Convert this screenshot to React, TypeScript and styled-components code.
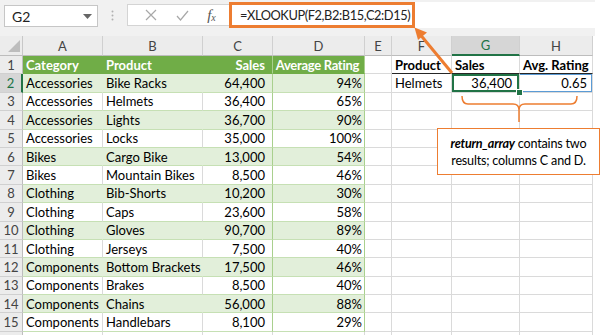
import React from 'react';
import styled, { createGlobalStyle } from 'styled-components';

const GlobalStyle = createGlobalStyle`
  html, body { margin: 0; padding: 0; background: #ffffff; }
  body { font-family: Lato, "Noto Sans", sans-serif; }
`;

const ORANGE = '#ED7D31';
const GRID = '#DADADA';
const TABLE_LINE = '#C6E0B4';
const TABLE_EDGE = '#A9D08E';
const BAND = '#E2EFDA';
const HEAD = '#70AD47';
const SELECT = '#217346';

const columns = ['A', 'B', 'C', 'D', 'E', 'F', 'G', 'H'];

const data: [string, string, string, string][] = [
  ['Accessories', 'Bike Racks', '64,400', '94%'],
  ['Accessories', 'Helmets', '36,400', '65%'],
  ['Accessories', 'Lights', '36,700', '90%'],
  ['Accessories', 'Locks', '35,000', '100%'],
  ['Bikes', 'Cargo Bike', '13,000', '54%'],
  ['Bikes', 'Mountain Bikes', '8,500', '46%'],
  ['Clothing', 'Bib-Shorts', '10,200', '30%'],
  ['Clothing', 'Caps', '23,600', '58%'],
  ['Clothing', 'Gloves', '90,700', '89%'],
  ['Clothing', 'Jerseys', '7,500', '40%'],
  ['Components', 'Bottom Brackets', '17,500', '46%'],
  ['Components', 'Brakes', '8,500', '40%'],
  ['Components', 'Chains', '56,000', '88%'],
  ['Components', 'Handlebars', '8,100', '29%'],
];

const App: React.FC = () => {
  return (
    <Page>
      <GlobalStyle />
      <FormulaBar>
        <NameBox>
          <span>G2</span>
          <svg width="9" height="5" viewBox="0 0 9 5">
            <path d="M0 0 L9 0 L4.5 5 Z" fill="#666" />
          </svg>
        </NameBox>
        <Grip>
          <svg width="3" height="11" viewBox="0 0 3 11">
            <circle cx="1.5" cy="1.5" r="1" fill="#B0B0B0" />
            <circle cx="1.5" cy="5.5" r="1" fill="#B0B0B0" />
            <circle cx="1.5" cy="9.5" r="1" fill="#B0B0B0" />
          </svg>
        </Grip>
        <Buttons>
          <svg width="12" height="12" viewBox="0 0 12 12">
            <path d="M1 1 L11 11 M11 1 L1 11" stroke="#A8A8A8" strokeWidth="1.2" />
          </svg>
          <svg width="13" height="11" viewBox="0 0 13 11">
            <path d="M1 6 L4.5 10 L12 1" stroke="#A8A8A8" strokeWidth="1.2" fill="none" />
          </svg>
          <Fx>
            f<sub>x</sub>
          </Fx>
        </Buttons>
        <FormulaInput>
          <FormulaBox>=XLOOKUP(F2,B2:B15,C2:D15)</FormulaBox>
        </FormulaInput>
      </FormulaBar>

      <Sheet>
        <Corner>
          <svg width="12" height="12" viewBox="0 0 12 12">
            <path d="M12 0 L12 12 L0 12 Z" fill="#BDBDBD" />
          </svg>
        </Corner>
        {columns.map((c) => (
          <ColHead key={c} $active={c === 'G'}>
            {c}
          </ColHead>
        ))}

        <RowHead>1</RowHead>
        <Cell $bg={HEAD} $color="#fff" $bold $right={HEAD} $bottom={HEAD}>Category</Cell>
        <Cell $bg={HEAD} $color="#fff" $bold $right={HEAD} $bottom={HEAD}>Product</Cell>
        <Cell $bg={HEAD} $color="#fff" $bold $align="right" $pad={7} $right={TABLE_EDGE} $bottom={HEAD}>
          Sales
        </Cell>
        <Cell $bg={HEAD} $color="#fff" $bold $align="right" $pad={5} $right={TABLE_EDGE} $bottom={HEAD}>
          <Tight>Average Rating</Tight>
        </Cell>
        <Cell />
        <Cell $bold $bottom="#262626">Product</Cell>
        <Cell $bold $bottom="#262626">Sales</Cell>
        <Cell $bold $bottom="#262626">Avg. Rating</Cell>

        {data.map((row, i) => {
          const n = i + 2;
          const band = n % 2 === 0;
          const bg = band ? BAND : '#fff';
          const inner = band ? BAND : GRID;
          return (
            <React.Fragment key={n}>
              <RowHead $active={n === 2}>{n}</RowHead>
              <Cell $bg={bg} $right={inner} $bottom={TABLE_LINE}>{row[0]}</Cell>
              <Cell $bg={bg} $right={inner} $bottom={TABLE_LINE}>{row[1]}</Cell>
              <Cell $bg={bg} $align="right" $pad={7} $right={TABLE_EDGE} $bottom={TABLE_LINE}>
                {row[2]}
              </Cell>
              <Cell $bg={bg} $align="right" $pad={2} $right={TABLE_EDGE} $bottom={TABLE_LINE}>
                {row[3]}
              </Cell>
              <Cell />
              {n === 2 ? (
                <>
                  <Cell>Helmets</Cell>
                  <Cell $align="right" $pad={7} $selected>
                    36,400
                  </Cell>
                  <Cell $align="right" $pad={5} $spill>
                    0.65
                  </Cell>
                </>
              ) : (
                <>
                  <Cell />
                  <Cell />
                  <Cell />
                </>
              )}
            </React.Fragment>
          );
        })}

        <RowHead />
        {columns.map((c) => (
          <Cell key={c} />
        ))}
      </Sheet>

      <Overlay width="602" height="335" viewBox="0 0 602 335">
        <path d="M452 73 L421 35.5" stroke={ORANGE} strokeWidth="3" fill="none" />
        <path d="M414.5 27.5 L427 32.5 L418 40 Z" fill={ORANGE} />
        <path
          d="M462 96 Q462 104 468 104 L513 104 Q519 104 519 110 L519 122 M519 110 Q519 104 525 104 L571 104 Q577 104 577 96"
          stroke={ORANGE}
          strokeWidth="1.5"
          fill="none"
        />
      </Overlay>

      <Callout>
        <CalloutLine>
          <em>return_array</em> contains two
        </CalloutLine>
        <CalloutLine>results; columns C and D.</CalloutLine>
      </Callout>
    </Page>
  );
};

export default App;

const Page = styled.div`
  position: relative;
  width: 602px;
  height: 335px;
  overflow: hidden;
  background: #ffffff;
  color: #000;
`;

const FormulaBar = styled.div`
  box-sizing: border-box;
  width: 595px;
  height: 36px;
  background: #f1f1f1;
  display: flex;
  align-items: flex-start;
  padding: 2px 0 0 4px;
`;

const NameBox = styled.div`
  box-sizing: border-box;
  width: 94px;
  height: 22px;
  margin-top: 3px;
  background: #fff;
  border: 1px solid #c6c6c6;
  display: flex;
  align-items: center;
  justify-content: space-between;
  padding: 0 5px 0 7px;
  font-size: 14px;
  color: #222;
`;

const Grip = styled.div`
  width: 29px;
  height: 26px;
  display: flex;
  align-items: center;
  justify-content: center;
`;

const Buttons = styled.div`
  box-sizing: border-box;
  width: 102px;
  height: 22px;
  margin-top: 2px;
  background: #fff;
  border: 1px solid #d4d4d4;
  border-right: none;
  display: flex;
  align-items: center;
  justify-content: space-around;
  padding: 0 4px 0 8px;
`;

const Fx = styled.span`
  font-family: "Liberation Serif", serif;
  font-style: italic;
  font-size: 15px;
  color: #555;
  sub {
    font-size: 10px;
    vertical-align: -1px;
  }
`;

const FormulaInput = styled.div`
  flex: 1;
  height: 26px;
  background: #fff;
  display: flex;
`;

const FormulaBox = styled.div`
  box-sizing: border-box;
  width: 186px;
  height: 26px;
  border: 3px solid ${ORANGE};
  display: flex;
  align-items: center;
  padding-left: 8px;
  font-size: 12.8px;
  letter-spacing: -0.4px;
  color: #222;
  white-space: nowrap;
`;

const Sheet = styled.div`
  display: grid;
  width: 593px;
  grid-template-columns: 23px 80px 100px 70px 92px 27px 60px 68px 73px;
  grid-template-rows: 20px repeat(15, 18.4px) 10px;
  font-size: 13px;
`;

const headBase = `
  box-sizing: border-box;
  background: #ececec;
  color: #444;
  display: flex;
  align-items: center;
  justify-content: center;
  font-size: 13px;
`;

const Corner = styled.div`
  ${headBase};
  justify-content: flex-end;
  align-items: flex-end;
  padding: 0 2px 3px 0;
  border-right: 1px solid #c8c8c8;
  border-bottom: 1px solid #bdbdbd;
`;

const ColHead = styled.div<{ $active?: boolean }>`
  ${headBase};
  border-right: 1px solid #d0d0d0;
  background: ${(p) => (p.$active ? '#d6d6d6' : '#ececec')};
  color: ${(p) => (p.$active ? SELECT : '#444')};
  border-bottom: ${(p) => (p.$active ? `2px solid ${SELECT}` : '1px solid #bdbdbd')};
`;

const RowHead = styled.div<{ $active?: boolean }>`
  ${headBase};
  background: ${(p) => (p.$active ? '#d6d6d6' : '#ececec')};
  color: ${(p) => (p.$active ? SELECT : '#444')};
  border-bottom: 1px solid #d0d0d0;
  border-right: ${(p) => (p.$active ? `2px solid ${SELECT}` : '1px solid #bdbdbd')};
`;

const Tight = styled.span`
  letter-spacing: -0.3px;
`;

const Cell = styled.div<{
  $bg?: string;
  $color?: string;
  $bold?: boolean;
  $align?: 'left' | 'right';
  $pad?: number;
  $right?: string;
  $bottom?: string;
  $selected?: boolean;
  $spill?: boolean;
}>`
  position: relative;
  box-sizing: border-box;
  display: flex;
  align-items: center;
  justify-content: ${(p) => (p.$align === 'right' ? 'flex-end' : 'flex-start')};
  padding: 0 ${(p) => p.$pad ?? 3}px 0 3px;
  background: ${(p) => p.$bg ?? '#fff'};
  color: ${(p) => p.$color ?? '#000'};
  font-weight: ${(p) => (p.$bold ? 700 : 400)};
  border-right: 1px solid ${(p) => p.$right ?? GRID};
  border-bottom: 1px solid ${(p) => p.$bottom ?? GRID};
  white-space: nowrap;
  ${(p) => p.$spill && `box-shadow: inset 0 1px 0 #5B9BD5, inset -1px 0 0 #5B9BD5, inset 0 -1px 0 #5B9BD5;`}
  ${(p) =>
    p.$selected &&
    `
    box-shadow: inset 0 0 0 2px ${SELECT};
    &::after {
      content: '';
      position: absolute;
      right: -4px;
      bottom: -4px;
      width: 5px;
      height: 5px;
      background: ${SELECT};
      border: 1px solid #fff;
      z-index: 2;
    }
  `}
`;

const Overlay = styled.svg`
  position: absolute;
  left: 0;
  top: 0;
  pointer-events: none;
`;

const Callout = styled.div`
  position: absolute;
  left: 437px;
  top: 128px;
  box-sizing: border-box;
  width: 163px;
  height: 47px;
  background: #fff;
  border: 1px solid ${ORANGE};
  display: flex;
  flex-direction: column;
  justify-content: center;
  align-items: center;
  font-size: 12.6px;
  letter-spacing: -0.2px;
  line-height: 17px;
  color: #000;
  em {
    font-weight: 700;
  }
`;

const CalloutLine = styled.div`
  white-space: nowrap;
`;
